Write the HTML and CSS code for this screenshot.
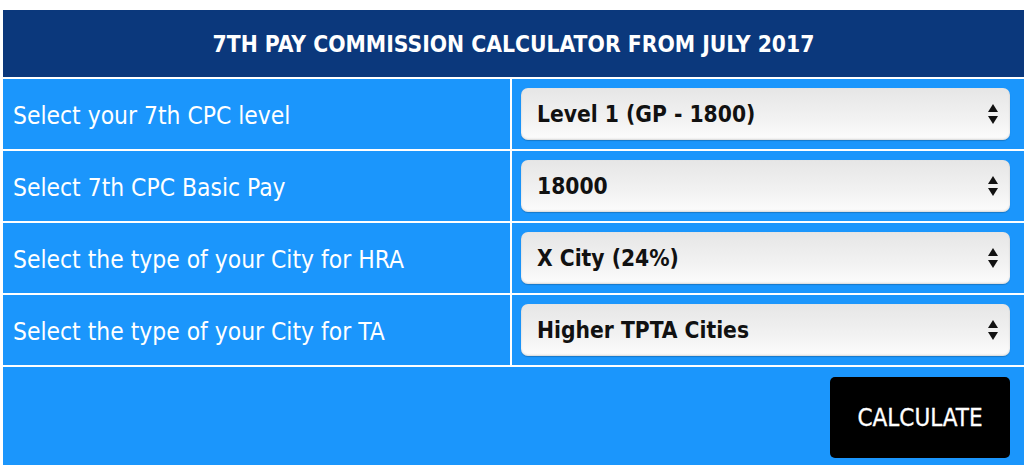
FILE: index.html
```html
<!DOCTYPE html>
<html>
<head>
<meta charset="utf-8">
<link rel="stylesheet" href="styles.css">
</head>
<body>
<div class="calc">
  <div class="head">7TH PAY COMMISSION CALCULATOR FROM JULY 2017</div>
  <div class="label">Select your 7th CPC level</div>
  <div class="field"><div class="sel"><span>Level 1 (GP - 1800)</span><svg class="arr" width="10" height="20" viewBox="0 0 10 20"><path d="M0 8 L5 0 L10 8 Z M0 12 L10 12 L5 20 Z" fill="#111"/></svg></div></div>
  <div class="label">Select 7th CPC Basic Pay</div>
  <div class="field"><div class="sel"><span>18000</span><svg class="arr" width="10" height="20" viewBox="0 0 10 20"><path d="M0 8 L5 0 L10 8 Z M0 12 L10 12 L5 20 Z" fill="#111"/></svg></div></div>
  <div class="label">Select the type of your City for HRA</div>
  <div class="field"><div class="sel"><span>X City (24%)</span><svg class="arr" width="10" height="20" viewBox="0 0 10 20"><path d="M0 8 L5 0 L10 8 Z M0 12 L10 12 L5 20 Z" fill="#111"/></svg></div></div>
  <div class="label">Select the type of your City for TA</div>
  <div class="field"><div class="sel"><span>Higher TPTA Cities</span><svg class="arr" width="10" height="20" viewBox="0 0 10 20"><path d="M0 8 L5 0 L10 8 Z M0 12 L10 12 L5 20 Z" fill="#111"/></svg></div></div>
  <div class="foot"><button class="btn">CALCULATE</button></div>
</div>
</body>
</html>
```
FILE: styles.css
```css
html, body {
  margin: 0;
  padding: 0;
  background: #fff;
  overflow: hidden;
}
body {
  padding: 10px 0 0 3px;
  font-family: "DejaVu Sans Condensed", "DejaVu Sans", sans-serif;
}
.calc {
  display: grid;
  grid-template-columns: 507px 512px;
  grid-template-rows: 67px 70px 70px 70px 70px 100px;
  gap: 2px;
  background: #fff;
  width: 1021px;
}
.head {
  grid-column: 1 / 3;
  background: #0b387c;
  color: #fff;
  font-weight: bold;
  font-size: 22.7px;
  display: flex;
  align-items: center;
  justify-content: center;
}
.label {
  background: #1b96fc;
  color: #fff;
  font-size: 24.4px;
  display: flex;
  align-items: center;
  padding: 2px 0 0 10px;
}
.field {
  background: #1b96fc;
  padding: 9px 14px 9px 9px;
}
.sel {
  height: 52px;
  box-sizing: border-box;
  border-radius: 7px;
  background: linear-gradient(#e6e6e6, #f2f2f2 60%, #fcfcfc);
  box-shadow: inset 0 -1px 2px rgba(0,0,0,0.15), 0 1px 1px rgba(0,0,0,0.2);
  display: flex;
  align-items: center;
  justify-content: space-between;
  padding: 0 12px 0 16px;
  font-weight: bold;
  font-size: 22.6px;
  color: #111;
}
.foot {
  grid-column: 1 / 3;
  background: #1b96fc;
  display: flex;
  justify-content: flex-end;
  align-items: flex-start;
  padding: 10px 14px 0 0;
}
.btn {
  width: 180px;
  height: 81px;
  background: #000;
  color: #fff;
  border: none;
  border-radius: 5px;
  font-family: "DejaVu Sans Condensed", "DejaVu Sans", sans-serif;
  font-size: 24px;
  -webkit-text-stroke: 0.3px #fff;
}
```
